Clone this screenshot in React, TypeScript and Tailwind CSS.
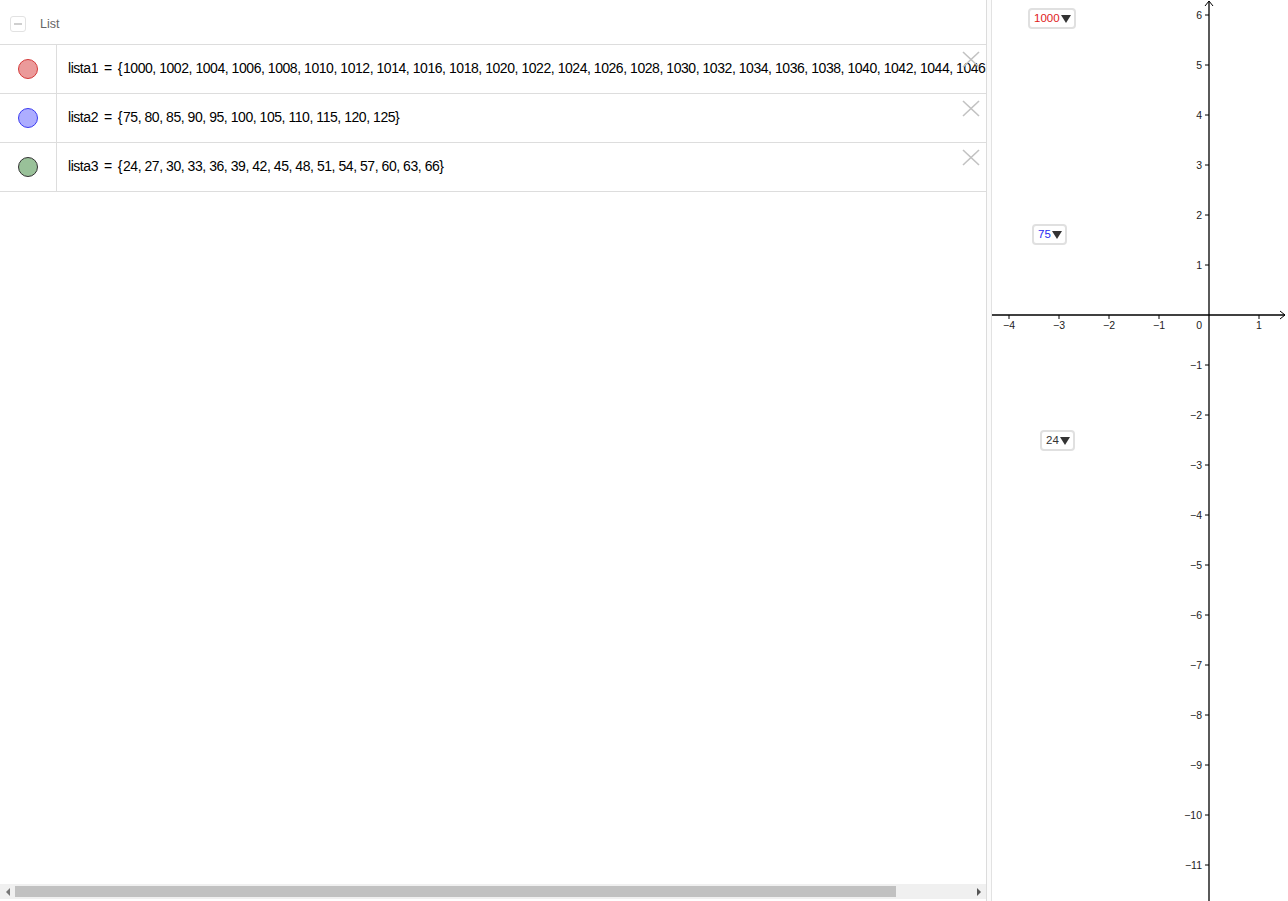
const lists = [
  {
    name: 'lista1',
    values: Array.from({ length: 60 }, (_, i) => 1000 + i * 2),
    dot: 'bg-[#eb9a9a] border-[#d43a3a]',
  },
  {
    name: 'lista2',
    values: [75, 80, 85, 90, 95, 100, 105, 110, 115, 120, 125],
    dot: 'bg-[#adadff] border-[#3b3bf0]',
  },
  {
    name: 'lista3',
    values: [24, 27, 30, 33, 36, 39, 42, 45, 48, 51, 54, 57, 60, 63, 66],
    dot: 'bg-[#99c199] border-[#333333]',
  },
];

// origin of the graphics view, in view coords
const OX = 217;
const OY = 315;
const UNIT = 50;

function Axes() {
  const xs = [-4, -3, -2, -1, 1];
  const ys = [6, 5, 4, 3, 2, 1, -1, -2, -3, -4, -5, -6, -7, -8, -9, -10, -11];
  const fmt = (n: number) => (n < 0 ? `\u2212${-n}` : `${n}`);
  return (
    <svg width="295" height="901" className="absolute left-0 top-0" style={{ fontFamily: '"Liberation Sans", Arial, sans-serif' }}>
      <line x1="0" y1={OY} x2="293" y2={OY} stroke="#000" strokeWidth="1.3" />
      <line x1={OX} y1="1" x2={OX} y2="901" stroke="#000" strokeWidth="1.3" />
      <polyline points={`288,${OY - 4} 293,${OY} 288,${OY + 4}`} fill="none" stroke="#000" strokeWidth="1" />
      <polyline points={`${OX - 4},6 ${OX},1 ${OX + 4},6`} fill="none" stroke="#000" strokeWidth="1" />
      {xs.map(v => {
        const x = OX + v * UNIT;
        return (
          <g key={v}>
            <line x1={x} y1={OY} x2={x} y2={OY + 4} stroke="#000" strokeWidth="1" />
            <text x={x} y={OY + 14} fontSize="10.5" textAnchor="middle" fill="#222">{fmt(v)}</text>
          </g>
        );
      })}
      <text x={OX - 7} y={OY + 14} fontSize="10.5" textAnchor="end" fill="#222">0</text>
      {ys.map(v => {
        const y = OY - v * UNIT;
        return (
          <g key={v}>
            <line x1={OX - 4} y1={y} x2={OX} y2={y} stroke="#000" strokeWidth="1" />
            <text x={OX - 7} y={y + 4} fontSize="10.5" textAnchor="end" fill="#222">{fmt(v)}</text>
          </g>
        );
      })}
    </svg>
  );
}

function Dropdown({ value, color, className }: { value: string; color: string; className: string }) {
  return (
    <div className={`absolute h-[21px] flex items-center pl-[4px] pr-[3px] rounded-[4px] border-2 border-[#e0e0e0] bg-white text-[11.5px] ${className}`}>
      <span className={color}>{value}</span>
      <svg width="10" height="8" viewBox="0 0 10 8" className="ml-[1px]">
        <polygon points="0,0 10,0 5,8" fill="#333" />
      </svg>
    </div>
  );
}

export default function App() {
  return (
    <div className="w-[1288px] h-[901px] bg-white flex overflow-hidden" style={{ fontFamily: '"Liberation Sans", Arial, sans-serif' }}>
      <div className="w-[987px] h-full border-r border-[#dcdcdc] flex flex-col">
        <div className="h-[44px] flex items-center pl-[10px] pt-[4px] gap-[14px] shrink-0">
          <div className="w-4 h-4 rounded-[3px] border border-[#e2e2e2] flex items-center justify-center">
            <div className="w-[8px] h-[1.5px] bg-[#cfcfcf]" />
          </div>
          <span className="text-[12.5px] text-[#666]">List</span>
        </div>
        <div className="border-t border-[#dddddd]">
          {lists.map(l => (
            <div key={l.name} className="h-[49px] flex border-b border-[#dddddd] relative">
              <div className="w-[57px] shrink-0 border-r border-[#dddddd] flex items-center justify-center">
                <div className={`w-[20px] h-[20px] rounded-full border ${l.dot}`} />
              </div>
              <div className="flex-1 overflow-hidden flex items-center pl-[11px] pb-[2px] text-[14px] tracking-[-0.45px] text-black whitespace-nowrap">
                <span>{l.name}</span>
                <span className="mx-[6px]">=</span>
                <span>{'{'}</span>
                <span className="ml-[1px]">{l.values.join(', ')}{'}'}</span>
              </div>
              <svg width="18" height="17" viewBox="0 0 18 17" className="absolute right-[6px] top-[6px]">
                <line x1="1" y1="1" x2="17" y2="16" stroke="#c2c2c2" strokeWidth="1.6" />
                <line x1="17" y1="1" x2="1" y2="16" stroke="#c2c2c2" strokeWidth="1.6" />
              </svg>
            </div>
          ))}
        </div>
        <div className="flex-1" />
        <div className="h-[15px] mb-[2px] bg-[#f0f0f0] flex items-center shrink-0">
          <div className="w-[15px] flex items-center justify-center">
            <div className="w-0 h-0 border-y-[4px] border-y-transparent border-r-[4px] border-r-[#777]" />
          </div>
          <div className="w-[881px] h-[11px] bg-[#c1c1c1]" />
          <div className="flex-1" />
          <div className="w-[15px] flex items-center justify-center">
            <div className="w-0 h-0 border-y-[4px] border-y-transparent border-l-[4px] border-l-[#555]" />
          </div>
        </div>
      </div>
      <div className="w-[5px] bg-[#fbfbfb] border-r border-[#e2e2e2]" />
      <div className="flex-1 relative">
        <Axes />
        <Dropdown value="1000" color="text-[#e02020]" className="left-[36px] top-[8px]" />
        <Dropdown value="75" color="text-[#2a2af0]" className="left-[40px] top-[224px]" />
        <Dropdown value="24" color="text-[#333]" className="left-[48px] top-[430px]" />
      </div>
    </div>
  );
}
